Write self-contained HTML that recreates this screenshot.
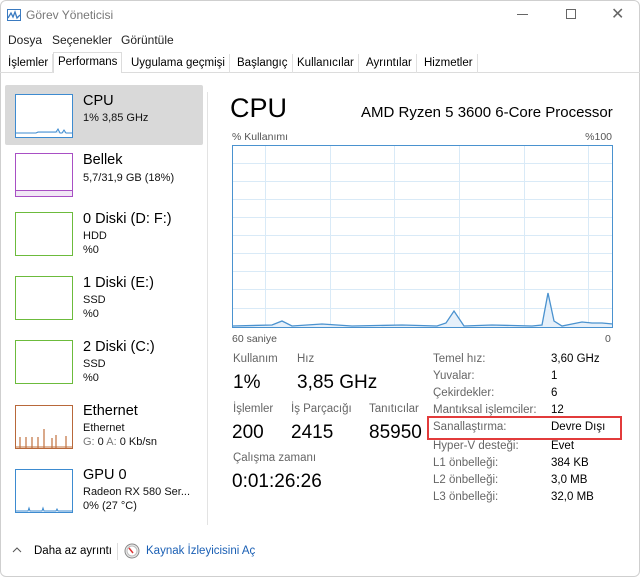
<!DOCTYPE html>
<html><head><meta charset="utf-8"><style>
*{margin:0;padding:0;box-sizing:border-box}
body{width:640px;height:577px;background:#fff;font-family:"Liberation Sans",sans-serif;color:#000;position:relative;overflow:hidden}
.a{position:absolute;white-space:nowrap}
.th{position:absolute;left:15px;width:58px;height:44px;background:#fff}
.n{font-size:14.5px;left:83px}
.s{font-size:11px;left:83px;color:#111}
.g{color:#666;font-size:11.5px}
.v{font-size:11.5px}
.tab{position:absolute;top:54px;height:19px;font-size:11.5px;padding:3px 4px 0;border-right:1px solid #e0e0e0}
</style></head><body>
<div class="a" style="left:0;top:0;width:640px;height:577px;border:1px solid #cfcfcf;border-radius:6px"></div>
<svg class="a" style="left:7px;top:9px" width="14" height="12"><rect x="0.5" y="0.5" width="13" height="11" fill="#fff" stroke="#3a7ac0"/><path d="M1 9 L4 4 L6 8 L8 3 L10 9 L13 6" fill="none" stroke="#3a7ac0" stroke-width="1.3"/></svg>
<div class="a" style="left:26px;top:8px;font-size:12px;color:#777">Görev Yöneticisi</div>
<div class="a" style="left:517px;top:14px;width:11px;height:1px;background:#666"></div>
<div class="a" style="left:566px;top:9px;width:10px;height:10px;border:1px solid #666"></div>
<div class="a" style="left:611px;top:4px;font-size:16px;color:#666">✕</div>
<div class="a" style="left:8px;top:33px;font-size:12px;color:#222">Dosya</div>
<div class="a" style="left:52px;top:33px;font-size:12px;color:#222">Seçenekler</div>
<div class="a" style="left:121px;top:33px;font-size:12px;color:#222">Görüntüle</div>
<div class="a" style="left:0;top:72px;width:640px;height:1px;background:#dcdcdc"></div>
<div class="tab" style="left:4px">İşlemler</div>
<div class="tab" style="left:53px;top:52px;height:21px;background:#fff;border:1px solid #dcdcdc;border-bottom:none;padding-top:3px">Performans</div>
<div class="tab" style="left:127px">Uygulama geçmişi</div>
<div class="tab" style="left:233px">Başlangıç</div>
<div class="tab" style="left:293px">Kullanıcılar</div>
<div class="tab" style="left:362px">Ayrıntılar</div>
<div class="tab" style="left:420px">Hizmetler</div>
<div class="a" style="left:5px;top:85px;width:198px;height:60px;background:#d9d9d9;border-radius:2px"></div>
<div class="a" style="left:207px;top:92px;width:1px;height:433px;background:#e3e3e3"></div>
<div class="th" style="top:94px;border:1px solid #3d8bd0"><svg width="56" height="42" style="position:absolute;left:0;top:0"><path d="M0 38 L20 38 L22 37 L40 37 L42 34 L44 38 L46 38 L48 35 L50 38 L56 38" fill="#dceaf7" stroke="#3d8bd0"/></svg></div>
<div class="a n" style="top:93px">CPU</div><div class="a s" style="top:112px">1% 3,85 GHz</div>
<div class="th" style="top:153px;border:1px solid #a84fc4"><div style="position:absolute;left:0;right:0;bottom:0;height:6px;background:#f1e7f5;border-top:1px solid #a84fc4"></div></div>
<div class="a n" style="top:152px">Bellek</div><div class="a s" style="top:172px">5,7/31,9 GB (18%)</div>
<div class="th" style="top:212px;border:1px solid #6cbb3c"></div>
<div class="a n" style="top:211px">0 Diski (D: F:)</div><div class="a s" style="top:230px">HDD</div><div class="a s" style="top:244px">%0</div>
<div class="th" style="top:276px;border:1px solid #6cbb3c"></div>
<div class="a n" style="top:275px">1 Diski (E:)</div><div class="a s" style="top:294px">SSD</div><div class="a s" style="top:308px">%0</div>
<div class="th" style="top:340px;border:1px solid #6cbb3c"></div>
<div class="a n" style="top:339px">2 Diski (C:)</div><div class="a s" style="top:358px">SSD</div><div class="a s" style="top:372px">%0</div>
<div class="th" style="top:405px;border:1px solid #b8683a"><svg width="56" height="42" style="position:absolute;left:0;top:0"><path d="M4 42 V31 M10 42 V31 M16 42 V31 M22 42 V31 M28 42 V23 M36 42 V32 M40 42 V29 M50 42 V30" stroke="#c0703e" stroke-width="1.2"/><path d="M0 41 H56" stroke="#c0703e"/></svg></div>
<div class="a n" style="top:403px">Ethernet</div><div class="a s" style="top:422px">Ethernet</div><div class="a s" style="top:436px"><span style="color:#777">G:</span> 0 <span style="color:#777">A:</span> 0 Kb/sn</div>
<div class="th" style="top:469px;border:1px solid #3d8bd0"><svg width="56" height="42" style="position:absolute;left:0;top:0"><path d="M0 41 L12 41 L13 38 L14 41 L26 41 L27 38 L28 41 L40 41 L41 39 L42 41 L56 41" fill="none" stroke="#3d8bd0"/></svg></div>
<div class="a n" style="top:467px">GPU 0</div><div class="a s" style="top:486px">Radeon RX 580 Ser...</div><div class="a s" style="top:500px">0% (27 °C)</div>
<div class="a" style="left:230px;top:93px;font-size:27px">CPU</div>
<div class="a" style="left:361px;top:104px;font-size:15px;width:251px;text-align:right">AMD Ryzen 5 3600 6-Core Processor</div>
<div class="a" style="left:232px;top:131px;font-size:10.5px;color:#555">% Kullanımı</div>
<div class="a" style="left:580px;top:131px;font-size:10.5px;color:#555;width:32px;text-align:right">%100</div>
<svg class="a" style="left:232px;top:145px" width="381" height="183">
<g stroke="#d9eaf7" stroke-width="1">
<path d="M0 18.5H381M0 36.5H381M0 54.5H381M0 72.5H381M0 90.5H381M0 108.5H381M0 126.5H381M0 144.5H381M0 163.5H381"/>
<path d="M33.5 0V183M98.5 0V183M162.5 0V183M227.5 0V183M292.5 0V183M356.5 0V183"/>
</g>
<path d="M0 181 L40 180 L50 176 L60 181 L90 179 L120 181 L170 180 L205 181 L214 178 L222 166 L232 181 L260 180 L300 181 L310 180 L316 148 L322 176 L330 181 L340 179 L350 177 L360 178 L370 178 L381 179 V183 H0Z" fill="#e6f0fa" stroke="#4a92cf" stroke-width="1.3"/>
<rect x="0.5" y="0.5" width="380" height="182" fill="none" stroke="#4a92cf"/>
</svg>
<div class="a" style="left:232px;top:333px;font-size:10.5px;color:#555">60 saniye</div>
<div class="a" style="left:605px;top:333px;font-size:10.5px;color:#555">0</div>
<div class="a g" style="left:233px;top:353px">Kullanım</div>
<div class="a g" style="left:297px;top:353px">Hız</div>
<div class="a" style="left:233px;top:372px;font-size:19px">1%</div>
<div class="a" style="left:297px;top:372px;font-size:19px">3,85 GHz</div>
<div class="a g" style="left:233px;top:403px">İşlemler</div>
<div class="a g" style="left:291px;top:403px">İş Parçacığı</div>
<div class="a g" style="left:369px;top:403px">Tanıtıcılar</div>
<div class="a" style="left:232px;top:422px;font-size:19px">200</div>
<div class="a" style="left:291px;top:422px;font-size:19px">2415</div>
<div class="a" style="left:369px;top:422px;font-size:19px">85950</div>
<div class="a g" style="left:233px;top:452px">Çalışma zamanı</div>
<div class="a" style="left:232px;top:471px;font-size:19px">0:01:26:26</div>
<div class="a g" style="left:433px;top:353px">Temel hız:</div><div class="a v" style="left:551px;top:353px">3,60 GHz</div>
<div class="a g" style="left:433px;top:370px">Yuvalar:</div><div class="a v" style="left:551px;top:370px">1</div>
<div class="a g" style="left:433px;top:387px">Çekirdekler:</div><div class="a v" style="left:551px;top:387px">6</div>
<div class="a g" style="left:433px;top:404px">Mantıksal işlemciler:</div><div class="a v" style="left:551px;top:404px">12</div>
<div class="a" style="left:427px;top:416px;width:195px;height:24px;border:2.5px solid #e23b3b;background:#fff"></div>
<div class="a g" style="left:433px;top:421px">Sanallaştırma:</div><div class="a v" style="left:551px;top:421px">Devre Dışı</div>
<div class="a g" style="left:433px;top:440px">Hyper-V desteği:</div><div class="a v" style="left:551px;top:440px">Evet</div>
<div class="a g" style="left:433px;top:457px">L1 önbelleği:</div><div class="a v" style="left:551px;top:457px">384 KB</div>
<div class="a g" style="left:433px;top:474px">L2 önbelleği:</div><div class="a v" style="left:551px;top:474px">3,0 MB</div>
<div class="a g" style="left:433px;top:491px">L3 önbelleği:</div><div class="a v" style="left:551px;top:491px">32,0 MB</div>
<svg class="a" style="left:12px;top:547px" width="10" height="6"><path d="M1 5 L5 1 L9 5" fill="none" stroke="#555"/></svg>
<div class="a" style="left:34px;top:545px;font-size:11.5px">Daha az ayrıntı</div>
<div class="a" style="left:117px;top:543px;width:1px;height:17px;background:#ddd"></div>
<svg class="a" style="left:124px;top:543px" width="16" height="16"><circle cx="8" cy="8" r="7" fill="#eee" stroke="#888"/><circle cx="8" cy="8" r="5" fill="#fff" stroke="#bbb"/><path d="M5 5 L9 10" stroke="#d33" stroke-width="1.5"/></svg>
<div class="a" style="left:146px;top:545px;font-size:11.5px;color:#1a5fb4">Kaynak İzleyicisini Aç</div>
</body></html>
